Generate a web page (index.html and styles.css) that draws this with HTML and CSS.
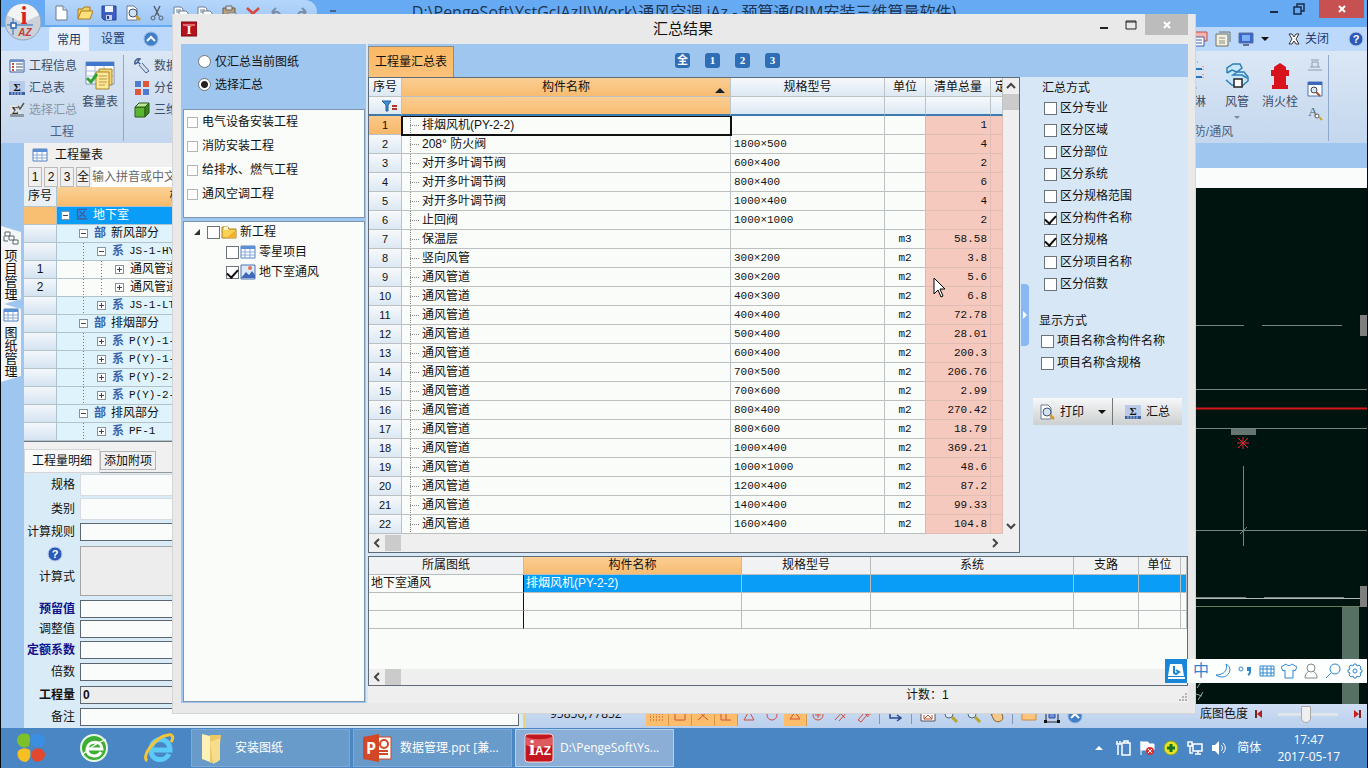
FILE: index.html
```html
<!DOCTYPE html>
<html lang="zh-CN">
  <head>
    <meta charset="utf-8" />
    <meta name="viewport" content="width=device-width, initial-scale=1.0" />
    <title>预算通(BIM安装三维算量软件)</title>
    <link rel="stylesheet" href="styles.css">
  </head>
  <body>
    <!-- 公用图标 -->
    <svg width="0" height="0" class="defs" aria-hidden="true">
      <symbol id="i-new" viewBox="0 0 16 16"><path d="M3 1h7l4 4v10H3z" fill="#fff" stroke="#6a7894"/><path d="M10 1v4h4" fill="#dbe6f5" stroke="#6a7894"/></symbol>
      <symbol id="i-open" viewBox="0 0 16 16"><path d="M1 14V4h5l1-2h6v4" fill="#f4cf62" stroke="#a97b1e"/><path d="M1 14l3-8h12l-3 8z" fill="#ffe07c" stroke="#a97b1e"/></symbol>
      <symbol id="i-save" viewBox="0 0 16 16"><path d="M1 1h14v14H3l-2-2z" fill="#3d5fc4" stroke="#27408f"/><path d="M4 1h8v6H4z" fill="#eef3fc"/><path d="M5 10h6v5H5z" fill="#c9d4ea"/><path d="M6 11h2v3H6z" fill="#27408f"/></symbol>
      <symbol id="i-view" viewBox="0 0 16 16"><path d="M2 1h7l3 3v11H2z" fill="#fff" stroke="#6a7894"/><circle cx="8" cy="8" r="4" fill="#cfe3f5" stroke="#40566f"/><path d="M11 11l4 4" stroke="#d39a32" stroke-width="2.500"/></symbol>
      <symbol id="i-cut" viewBox="0 0 16 16"><path d="M5 1l5 10M11 1L6 11" stroke="#56606e" stroke-width="1.500"/><circle cx="4" cy="13" r="2" fill="none" stroke="#56606e"/><circle cx="12" cy="13" r="2" fill="none" stroke="#56606e"/></symbol>
      <symbol id="i-copy" viewBox="0 0 16 16"><path d="M1 2h7l2 2v8H1z" fill="#fff" stroke="#6d7c93"/><path d="M6 6h7l2 2v7H6z" fill="#fff" stroke="#6d7c93"/><path d="M3 5h5M3 7h3M8 10h5M8 12h5" stroke="#6d7c93"/></symbol>
      <symbol id="i-paste" viewBox="0 0 16 16"><path d="M2 3h12v12H2z" fill="#b9a07c" stroke="#6b5c48"/><path d="M5 1h6v4H5z" fill="#ddd" stroke="#666"/><path d="M7 8h8v7H7z" fill="#fff" stroke="#6d7c93"/></symbol>
      <symbol id="i-del" viewBox="0 0 16 16"><path d="M2 3l12 11M14 3L2 14" stroke="#d8463e" stroke-width="2.500"/></symbol>
      <symbol id="i-undo" viewBox="0 0 16 16"><path d="M3 7h6a4 4 0 010 7M3 7l4-4M3 7l4 4" fill="none" stroke="#7c8da6" stroke-width="2"/></symbol>
      <symbol id="i-redo" viewBox="0 0 16 16"><path d="M13 7H7a4 4 0 000 7M13 7L9 3M13 7l-4 4" fill="none" stroke="#7c8da6" stroke-width="2"/></symbol>
      <symbol id="i-list" viewBox="0 0 16 16"><path d="M1 2h14v12H1z" fill="#fff" stroke="#3d5fa5"/><path d="M1 2h14v2H1z" fill="#6d90cf"/><path d="M7 6h7M7 9h7M7 12h7" stroke="#44597a"/><path d="M3 6h2M3 9h2M3 12h2" stroke="#d0483c" stroke-width="2"/></symbol>
      <symbol id="i-sigma" viewBox="0 0 16 16"><path d="M0 1h16v14H0z" fill="#b9cbe8"/><path d="M0 12h16v3H0z" fill="#3c5f9f"/><path d="M3 12v3M6 12v3M9 12v3M12 12v3" stroke="#a9c2e8"/><text x="8" y="11" text-anchor="middle" font-size="11" font-weight="bold" font-family="Liberation Serif" fill="#111">Σ</text></symbol>
      <symbol id="i-pick" viewBox="0 0 16 16"><path d="M1 3h11v11H1z" fill="#dfe3e8"/><path d="M1 12h14v3H1z" fill="#8d98a5"/><text x="6" y="12" text-anchor="middle" font-size="10" font-weight="bold" font-family="Liberation Serif" fill="#333">Σ</text><path d="M9 4l2 3 4-6" fill="none" stroke="#555" stroke-width="1.500"/></symbol>
      <symbol id="i-big" viewBox="0 0 30 30"><path d="M1 1h28v22H1z" fill="#fff" stroke="#7f95b5"/><path d="M1 1h28v4H1z" fill="#3f78cc"/><path d="M1 10h28M1 15h28M10 5v18M19 5v18" stroke="#a9bdd9"/><path d="M14 8h13v16H14z" fill="#f2d774" stroke="#a8842c"/><path d="M11 11h13v17H11z" fill="#ffe897" stroke="#a8842c"/><path d="M14 15h8M14 18h8M14 21h8M14 24h6" stroke="#b99944"/><path d="M2 17l4 4 6-8" fill="none" stroke="#2fa336" stroke-width="3"/></symbol>
      <symbol id="i-wrench" viewBox="0 0 16 16"><path d="M6 1C3 0 0 3 1 6l2-1 1-2zM4 4l9 9" fill="none" stroke="#46618f" stroke-width="1.500"/><path d="M5 7l7 8 3-2-7-8" fill="#d4def0" stroke="#46618f"/></symbol>
      <symbol id="i-blocks" viewBox="0 0 16 16"><path d="M1 1h6v6H1zM9 9h6v6H9z" fill="#4f7cd0"/><path d="M9 1h6v6H9zM1 9h6v6H1z" fill="#e0563a"/></symbol>
      <symbol id="i-cube" viewBox="0 0 16 16"><path d="M1 5h10v10H1z" fill="#5bb531" stroke="#2d5a1c"/><path d="M1 5l4-4h10l-4 4z" fill="#b9e79a" stroke="#2d5a1c"/><path d="M11 5l4-4v10l-4 4z" fill="#37861b" stroke="#2d5a1c"/></symbol>
      <symbol id="i-grid" viewBox="0 0 16 16"><path d="M1 2h14v12H1z" fill="#fff" stroke="#5680bd"/><path d="M1 2h14v3H1z" fill="#5c90d4"/><path d="M1 8h14M1 11h14M5 5v9M10 5v9" stroke="#87a9d6"/></symbol>
      <symbol id="i-folder" viewBox="0 0 16 16"><path d="M1 3h6l1 2h7v9H1z" fill="#fbd153" stroke="#a87c22"/><path d="M3 3h4v3H3z" fill="#fff6c8"/><path d="M15 6L5 14h10z" fill="#eeb22e"/></symbol>
      <symbol id="i-pic" viewBox="0 0 16 16"><path d="M1 1h14v14H1z" fill="#dceafb" stroke="#4f72b4"/><path d="M1 14l5-6 3 3 3-4 3 4v3z" fill="#3f68b8"/><circle cx="10" cy="4" r="2" fill="#e0704a"/></symbol>
      <symbol id="i-up" viewBox="0 0 16 16"><circle cx="8" cy="8" r="7" fill="#3f7fc8" stroke="#8fb5e2"/><path d="M4 10l4-4 4 4" fill="none" stroke="#fff" stroke-width="2"/></symbol>
      <symbol id="i-help" viewBox="0 0 16 16"><circle cx="8" cy="8" r="7" fill="#2c59b8" stroke="#b9cdef"/><text x="8" y="12" text-anchor="middle" font-size="11" font-weight="bold" font-family="Liberation Sans" fill="#fff">?</text></symbol>
      <symbol id="i-funnel" viewBox="0 0 16 16"><path d="M1 3h9L7 7v6H5V7z" fill="#3e8fd8" stroke="#23619c"/><path d="M11 8h5M11 11h5" stroke="#b3382c" stroke-width="2"/></symbol>
      <symbol id="i-screen" viewBox="0 0 16 16"><path d="M1 2h14v10H1z" fill="#3566d4" stroke="#5c7296"/><path d="M4 4h8v6H4z" fill="#7fb0f5"/><path d="M5 14h6" stroke="#5c7296" stroke-width="2"/></symbol>
      <symbol id="i-sheet" viewBox="0 0 16 16"><path d="M1 3h12v12H1z" fill="#f1efe2" stroke="#6d7460"/><path d="M4 1h11v10" fill="none" stroke="#6d7460"/><path d="M4 7h6M4 10h6M4 12h6" stroke="#8b9178"/></symbol>
      <symbol id="i-zoom" viewBox="0 0 16 16"><circle cx="6" cy="6" r="4" fill="#dbeaf8" stroke="#52647a"/><path d="M9 9l5 5" stroke="#b8a62b" stroke-width="3"/></symbol>
    </svg>

    <div class="app">
      <header class="caption">
        <button class="orb" aria-label="主菜单">
          <svg width="38" height="38" viewBox="0 0 38 38"><circle cx="19" cy="19" r="18" fill="#cdd2d8" stroke="#8ea5c4"/><path d="M3 12a17 17 0 0132 0L19 20z" fill="#f2f3f4"/><path d="M9 15v17M3 22h26" stroke="#2867b5"/><path d="M7 20h5v5H7z" fill="#fff" stroke="#2867b5" stroke-width="1.500"/><text x="20" y="21" text-anchor="middle" font-family="Liberation Serif" font-size="25" font-weight="bold" fill="#dd1f1f">i</text><text x="21" y="33" text-anchor="middle" font-family="Liberation Sans" font-size="10" font-weight="bold" font-style="italic" fill="#c23c33">AZ</text></svg>
        </button>
        <nav class="qat">
          <button aria-label="新建"><svg><use href="#i-new"/></svg></button>
          <button aria-label="打开"><svg><use href="#i-open"/></svg></button>
          <button aria-label="保存"><svg><use href="#i-save"/></svg></button>
          <button aria-label="预览"><svg><use href="#i-view"/></svg></button>
          <button aria-label="剪切"><svg><use href="#i-cut"/></svg></button>
          <button aria-label="复制"><svg><use href="#i-copy"/></svg></button>
          <button aria-label="复制项"><svg><use href="#i-copy"/></svg></button>
          <button aria-label="粘贴"><svg><use href="#i-paste"/></svg></button>
          <button aria-label="删除"><svg><use href="#i-del"/></svg></button>
          <button aria-label="撤销"><svg><use href="#i-undo"/></svg></button>
          <button aria-label="重做"><svg><use href="#i-redo"/></svg></button>
        </nav>
        <button class="qat-more" aria-label="自定义"><svg width="8" height="8" viewBox="0 0 8 8"><path d="M1 1h6" stroke="#223"/><path d="M1 4h6L4 7z" fill="#223"/></svg></button>
        <div class="app-title">D:\PengeSoft\YstGclAzII\Work\通风空调.iAz - 预算通(BIM安装三维算量软件)</div>
        <div class="win-btns">
          <button aria-label="最小化"><svg width="10" height="10" viewBox="0 0 10 10"><path d="M1 8h8" stroke="#1b2b45" stroke-width="2"/></svg></button>
          <button aria-label="还原"><svg width="12" height="12" viewBox="0 0 12 12"><path d="M1 4h7v7H1zM4 4V1h7v7H8" fill="none" stroke="#1b2b45" stroke-width="1.500"/></svg></button>
          <button class="close" aria-label="关闭窗口"><svg width="8" height="8" viewBox="0 0 8 8"><path d="M1 1l6 6M7 1L1 7" stroke="#fff" stroke-width="2"/></svg></button>
        </div>
      </header>

      <nav class="tabs">
        <button class="tab on">常用</button>
        <button class="tab">设置</button>
        <button class="ico" aria-label="折叠功能区"><svg><use href="#i-up"/></svg></button>
        <div class="tabs-right">
          <button class="ico" aria-label="图层"><svg viewBox="0 0 16 16"><path d="M2 1h13v9H2z" fill="#f6b3ab" stroke="#c04f48"/><path d="M1 6h11v9H1z" fill="#fff" stroke="#3a5fae"/><path d="M3 9h7M3 12h7" stroke="#3a5fae"/></svg></button>
          <button class="ico" aria-label="页面"><svg><use href="#i-sheet"/></svg></button>
          <button class="ico" aria-label="屏幕"><svg><use href="#i-screen"/></svg></button>
          <button class="drop" aria-label="更多屏幕"></button>
          <button class="txt"><svg width="12" height="12" viewBox="0 0 12 12"><path d="M1 1h3l2 3 2-3h3L8 6l3 5H8L6 8l-2 3H1l3-5z" fill="#fff" stroke="#333"/></svg>关闭</button>
          <button class="ico" aria-label="帮助"><svg><use href="#i-help"/></svg></button>
        </div>
      </nav>

      <div class="ribbon">
        <section class="group">
          <div class="group-body">
            <div class="stack">
              <button><svg><use href="#i-list"/></svg>工程信息</button>
              <button><svg><use href="#i-sigma"/></svg>汇总表</button>
              <button class="off"><svg><use href="#i-pick"/></svg>选择汇总</button>
            </div>
            <button class="big"><svg width="30" height="30"><use href="#i-big"/></svg>套量表</button>
          </div>
          <div class="group-name">工程</div>
        </section>
        <section class="group">
          <div class="group-body">
            <div class="stack">
              <button><svg><use href="#i-wrench"/></svg>数据维护</button>
              <button><svg><use href="#i-blocks"/></svg>分色显示</button>
              <button><svg><use href="#i-cube"/></svg>三维显示</button>
            </div>
          </div>
        </section>
        <section class="group vent">
          <div class="group-body">
            <button class="big"><svg width="26" height="30" viewBox="0 0 26 30"><path d="M13 1v26M3 8h18M3 16h18" stroke="#2277c8" stroke-width="2"/><circle cx="13" cy="27" r="2" fill="#fff" stroke="#2277c8"/><path d="M22 5v6M22 13v6M4 5v6M4 13v6M10 1h7" stroke="#d05a5a" stroke-dasharray="1 2"/></svg>喷淋</button>
            <button class="big"><svg width="26" height="30" viewBox="0 0 26 30"><path d="M3 12V7l6-4h7l2 4-5 4h7l4 5v4l-6 5-10-1-6-5" fill="#c9e6f8" stroke="#2c7fb8" stroke-width="1.500"/><path d="M3 12l5-3 5 2-4 3h9l5 3" fill="none" stroke="#2c7fb8" stroke-width="1.500"/><path d="M10 18h8v8h-8z" fill="#fff" stroke="#222" stroke-width="1.500"/></svg>风管<i class="drop"></i></button>
            <button class="big"><svg width="26" height="30" viewBox="0 0 26 30"><path d="M13 2l6 4v3h3v6h-3v9h2v4H5v-4h2v-9H4V9h3V6z" fill="#d8131b"/></svg>消火栓</button>
            <div class="tools">
              <button class="ico" aria-label="阀门"><svg viewBox="0 0 16 16"><path d="M1 13h14M3 10h10M5 10V5h6v5M4 3h8" fill="none" stroke="#929ca9"/></svg></button>
              <button class="ico" aria-label="查找表"><svg viewBox="0 0 16 16"><path d="M1 1h14v14H1z" fill="#fff" stroke="#4b74b6"/><path d="M1 1h14v3H1z" fill="#3b67b8"/><circle cx="7" cy="9" r="3" fill="#d8e8f8" stroke="#445"/><path d="M9 11l4 4" stroke="#a4522c" stroke-width="2"/></svg></button>
              <button class="ico" aria-label="查找文字"><svg viewBox="0 0 16 16"><text x="6" y="11" text-anchor="middle" font-size="13" font-family="Liberation Serif" fill="#4b5a70">A</text><circle cx="10" cy="11" r="2" fill="#fff" stroke="#556"/><path d="M12 12l3 3" stroke="#d0a52a" stroke-width="2"/></svg></button>
            </div>
          </div>
          <div class="group-name">消防/通风</div>
        </section>
      </div>

      <main class="work">
        <aside class="side-tabs">
          <button><svg viewBox="0 0 16 16"><path d="M2 2h5v4H2zM6 6h5v4H6zM10 10h5v4h-5z" fill="#fff" stroke="#566"/><path d="M1 6v5h4" fill="none" stroke="#566"/></svg>项目管理</button>
          <button><svg><use href="#i-grid"/></svg>图纸管理</button>
        </aside>

        <section class="panel">
          <h2><svg><use href="#i-grid"/></svg>工程量表</h2>
          <div class="find">
            <button>1</button><button>2</button><button>3</button><button>全</button>
            <input type="text" placeholder="输入拼音或中文首字母" aria-label="查找" />
          </div>
          <table class="parts">
            <thead><tr><th>序号</th><th class="on">构件名称</th><th class="on"></th></tr></thead>
            <tbody id="parts"></tbody>
          </table>
          <div class="detail-tabs">
            <button class="on">工程量明细</button>
            <button>添加附项</button>
          </div>
          <form class="detail">
            <label for="f1">规格</label><input id="f1" class="flat" />
            <label for="f2">类别</label><input id="f2" class="flat" />
            <label for="f3">计算规则</label><input id="f3" />
            <div class="formula"><svg><use href="#i-help"/></svg><label for="f4">计算式</label></div><textarea id="f4"></textarea>
            <label for="f5" class="key">预留值</label><input id="f5" />
            <label for="f6">调整值</label><input id="f6" />
            <label for="f7" class="key">定额系数</label><input id="f7" />
            <label for="f8">倍数</label><input id="f8" />
            <label for="f9" class="strong">工程量</label><input id="f9" class="total" value="0" />
            <label for="f10">备注</label><input id="f10" />
          </form>
        </section>

        <section class="drawing">
          <div class="strip"></div>
          <div class="ruler"></div>
          <div class="model">
            <svg width="171" height="516" viewBox="0 0 171 516">
              <g fill="none" stroke="#75867f">
                <path d="M0 137.500h48M66 137.500h80M0 201.500h171M0 240.500h171M0 342.500h171"/>
                <path d="M0 409.500h50M68 409.500h80M47.500 278v80M44 346l7-7"/>
              </g>
              <path d="M0 410.500h165" stroke="#b9b9b9"/>
              <path d="M0 418.500h171" stroke="#667f5c"/>
              <path d="M0 220.500h171" stroke="#d5161c" stroke-width="2"/>
              <path d="M35 241h25v6H35z" fill="#66756f"/>
              <path d="M42 250l10 10M52 250l-10 10M47 249v12M41 255h12" stroke="#e2263a"/>
              <path d="M146 419h17v97h-17z" fill="#567064"/>
              <path d="M164 127h7v21h-7zM164 398h7v21h-7z" fill="#7f7f7f"/>
              <path d="M1 500l4-6M0 506l6 2M2 512l5-8" stroke="#9aa69f"/>
            </svg>
          </div>
          <footer class="status">
            <span class="coords">95856,77852</span>
            <div class="snaps">
              <button class="on" aria-label="栅格"><svg viewBox="0 0 16 16"><path d="M1 3h14M1 6h14M1 9h14M1 12h14" stroke="#a8502c" stroke-dasharray="1 2"/></svg></button>
              <button class="on" aria-label="端点"><svg viewBox="0 0 16 16"><path d="M3 3h10v9H3z"/></svg></button>
              <button class="on" aria-label="交点"><svg viewBox="0 0 16 16"><path d="M3 3l10 9M13 3L3 12"/></svg></button>
              <button class="on" aria-label="垂足"><svg viewBox="0 0 16 16"><path d="M3 3v9h10M8 3v9"/></svg></button>
              <button aria-label="中点"><svg viewBox="0 0 16 16"><path d="M8 3l5 9H3z"/></svg></button>
              <button aria-label="圆心"><svg viewBox="0 0 16 16"><circle cx="8" cy="7" r="5"/></svg></button>
              <button class="on" aria-label="三角"><svg viewBox="0 0 16 16"><path d="M8 4l5 7H3z"/></svg></button>
              <button aria-label="节点"><svg viewBox="0 0 16 16"><circle cx="8" cy="7" r="5"/><path d="M5 7h6M8 4v6"/></svg></button>
              <button aria-label="平行"><svg viewBox="0 0 16 16"><path d="M2 12L10 3M6 13l8-9M8 6l4 4"/></svg></button>
              <button aria-label="延伸"><svg viewBox="0 0 16 16"><path d="M2 12l6-7 3 2-6 7zM9 6h6M12 3v6"/></svg></button>
            </div>
            <div class="views">
              <button aria-label="正交"><svg viewBox="0 0 16 16"><path d="M2 4v6h11M9 7l4 3-4 3" fill="none" stroke="#2c4a90" stroke-width="1.500"/></svg></button>
              <button class="first" aria-label="全图"><svg viewBox="0 0 16 16"><path d="M1 3h14v10H1z" fill="#fff" stroke="#555"/><path d="M4 7v4h8V7M4 11l4-4 4 4" fill="none" stroke="#c0502c"/></svg></button>
              <button aria-label="放大"><svg><use href="#i-zoom"/></svg></button>
              <button aria-label="缩小"><svg><use href="#i-zoom"/></svg></button>
              <button aria-label="平移"><svg viewBox="0 0 16 16"><path d="M2 6l3 6c3 3 8 2 9-2l-1-4-3-2-2 2-3-3-1 3z" fill="#f4c98c" stroke="#8c5c2c"/></svg></button>
              <button class="first" aria-label="图纸"><svg viewBox="0 0 16 16"><path d="M1 4l2-2h12v10H1z" fill="#ffc57c" stroke="#cf8a3c"/></svg></button>
              <button aria-label="窗口"><svg viewBox="0 0 16 16"><path d="M2 1v13h12V1" fill="none" stroke="#223"/><path d="M5 3h6v7H5z" fill="#6d8fe0" stroke="#2c4a90"/><path d="M0 12h3v3H0zM13 12h3v3h-3z" fill="#111"/></svg></button>
              <button aria-label="收起"><svg><use href="#i-up"/></svg></button>
            </div>
            <label class="shade">底图色度
              <svg width="8" height="8" viewBox="0 0 8 8"><path d="M1 0v8" stroke="#7d2222" stroke-width="2"/><path d="M7 0v8L2 4z" fill="#b02020"/></svg>
              <input type="range" value="46" />
              <svg width="8" height="8" viewBox="0 0 8 8"><path d="M7 0v8" stroke="#7d2222" stroke-width="2"/><path d="M1 0v8l5-4z" fill="#d01a1a"/></svg>
            </label>
          </footer>
        </section>
      </main>
    </div>

    <!-- 汇总结果 -->
    <div class="dialog" role="dialog" aria-labelledby="dlg-title">
      <header class="dlg-head">
        <svg class="dlg-icon" viewBox="0 0 16 16"><path d="M0 1h16v14H0z" fill="#b5121c" stroke="#7c0d14"/><path d="M2 3h12v2H2z" fill="#e26a6e"/><text x="8" y="13" text-anchor="middle" font-size="13" font-weight="bold" font-family="Liberation Serif" fill="#fff">I</text></svg>
        <h1 id="dlg-title">汇总结果</h1>
        <div class="dlg-btns">
          <button aria-label="最小化"><svg width="10" height="10" viewBox="0 0 10 10"><path d="M1 8h8" stroke="#222" stroke-width="2"/></svg></button>
          <button aria-label="最大化"><svg width="12" height="10" viewBox="0 0 12 10"><path d="M1 1h10v8H1zM1 2h10" fill="none" stroke="#222"/></svg></button>
          <button class="close" aria-label="关闭"><svg width="10" height="10" viewBox="0 0 10 10"><path d="M2 2l6 6M8 2L2 8" stroke="#fff" stroke-width="2"/></svg></button>
        </div>
      </header>

      <div class="dlg-body">
        <aside class="scope">
          <div class="scope-mode">
            <label><input type="radio" name="scope" />仅汇总当前图纸</label>
            <label><input type="radio" name="scope" checked />选择汇总</label>
          </div>
          <div class="majors">
            <label><input type="checkbox" />电气设备安装工程</label>
            <label><input type="checkbox" />消防安装工程</label>
            <label><input type="checkbox" />给排水、燃气工程</label>
            <label><input type="checkbox" />通风空调工程</label>
          </div>
          <div class="tree">
            <label class="root"><svg width="8" height="8" viewBox="0 0 8 8"><path d="M7 1v6H1z" fill="#333"/></svg><input type="checkbox" /><svg><use href="#i-folder"/></svg>新工程</label>
            <label><input type="checkbox" /><svg><use href="#i-grid"/></svg>零星项目</label>
            <label><input type="checkbox" checked /><svg><use href="#i-pic"/></svg>地下室通风</label>
          </div>
        </aside>

        <div class="result">
          <div class="result-tabs">
            <button class="result-tab">工程量汇总表</button>
            <div class="levels"><button>全</button><button>1</button><button>2</button><button>3</button></div>
          </div>

          <div class="upper">
            <div class="grid-box">
              <div class="grid-view">
                <table class="sum">
                  <colgroup><col class="c-no"><col><col class="c-spec"><col class="c-unit"><col class="c-qty"><col class="c-more"></colgroup>
                  <thead>
                    <tr><th>序号</th><th class="on">构件名称<i class="sort"></i></th><th>规格型号</th><th>单位</th><th>清单总量</th><th class="cut">定额</th></tr>
                    <tr class="filter"><th><svg width="16" height="16"><use href="#i-funnel"/></svg></th><th class="on"></th><th></th><th></th><th></th><th></th></tr>
                  </thead>
                  <tbody id="sum"></tbody>
                </table>
              </div>
              <div class="vbar"><button aria-label="向上"><svg viewBox="0 0 10 10"><path d="M1 7l4-4 4 4"/></svg></button><i></i><button class="end" aria-label="向下"><svg viewBox="0 0 10 10"><path d="M1 3l4 4 4-4"/></svg></button></div>
              <div class="hbar"><button aria-label="向左"><svg viewBox="0 0 10 10"><path d="M7 1L3 5l4 4"/></svg></button><i></i><button class="end" aria-label="向右"><svg viewBox="0 0 10 10"><path d="M3 1l4 4-4 4"/></svg></button></div>
            </div>

            <div class="options">
              <button class="handle" aria-label="收起"></button>
              <div class="option-list">
                <fieldset>
                  <legend>汇总方式</legend>
                  <label><input type="checkbox" />区分专业</label>
                  <label><input type="checkbox" />区分区域</label>
                  <label><input type="checkbox" />区分部位</label>
                  <label><input type="checkbox" />区分系统</label>
                  <label><input type="checkbox" />区分规格范围</label>
                  <label><input type="checkbox" checked />区分构件名称</label>
                  <label><input type="checkbox" checked />区分规格</label>
                  <label><input type="checkbox" />区分项目名称</label>
                  <label><input type="checkbox" />区分倍数</label>
                </fieldset>
                <fieldset class="show">
                  <legend>显示方式</legend>
                  <label><input type="checkbox" />项目名称含构件名称</label>
                  <label><input type="checkbox" />项目名称含规格</label>
                </fieldset>
                <div class="actions">
                  <button><svg><use href="#i-view"/></svg>打印<i class="drop"></i></button>
                  <button><svg><use href="#i-sigma"/></svg>汇总</button>
                </div>
              </div>
            </div>
          </div>

          <div class="lower">
            <table class="source">
              <colgroup><col class="s-draw"><col class="s-name"><col class="s-spec"><col><col class="s-road"><col class="s-unit"><col class="s-more"></colgroup>
              <thead><tr><th>所属图纸</th><th class="on">构件名称</th><th>规格型号</th><th>系统</th><th>支路</th><th>单位</th><th></th></tr></thead>
              <tbody>
                <tr class="sel"><td>地下室通风</td><td>排烟风机(PY-2-2)</td><td></td><td></td><td></td><td></td><td></td></tr>
                <tr><td></td><td></td><td></td><td></td><td></td><td></td><td></td></tr>
                <tr><td></td><td></td><td></td><td></td><td></td><td></td><td></td></tr>
              </tbody>
            </table>
            <div class="hbar"><button aria-label="向左"><svg viewBox="0 0 10 10"><path d="M7 1L3 5l4 4"/></svg></button><i></i></div>
          </div>
          <div class="dlg-status"><span>计数：1</span><svg width="10" height="10" viewBox="0 0 10 10"><path d="M7 1h2M4 4h2M7 4h2M1 7h2M4 7h2M7 7h2" stroke="#b5b5b5" stroke-width="2"/></svg></div>
        </div>
      </div>
    </div>

    <svg class="pointer" viewBox="0 0 13 21"><path d="M1 1v16l4-4 3 7 2-1-3-7h5z" fill="#fff" stroke="#000"/></svg>

    <!-- 输入法 -->
    <div class="ime">
      <svg class="bing" viewBox="0 0 22 24"><path d="M0 0h22v24H0z" fill="#1a86d8"/><path d="M5 5h12l2 12H3zM3 18h17v2H3z" fill="#fff"/><path d="M9 7v7l2 1 3-2-3-2" fill="none" stroke="#1a86d8" stroke-width="2"/></svg>
      <span>中</span>
      <svg viewBox="0 0 16 16"><path d="M11 1c2 6-2 11-10 11 5 4 13 2 14-5 0-3-2-5-4-6z"/></svg>
      <svg viewBox="0 0 16 16"><circle cx="4" cy="6" r="2"/><path d="M12 6c2 2 1 5-1 6M11 5h2v2h-2z" stroke-width="2"/></svg>
      <svg viewBox="0 0 16 16"><path d="M1 3h14v10H1zM1 6h14M1 10h14M4 3v10M8 3v10M12 3v10"/></svg>
      <svg viewBox="0 0 16 16"><path d="M5 1c1 2 5 2 6 0l5 3-2 4-2-1v8H4V7L2 8 0 4z"/></svg>
      <svg class="gray" viewBox="0 0 16 16"><circle cx="8" cy="5" r="4"/><path d="M6 8c-3 2-4 4-4 7h12c0-3-1-5-4-7"/></svg>
      <svg viewBox="0 0 16 16"><circle cx="10" cy="6" r="5"/><path d="M6 10l-5 5"/></svg>
      <svg viewBox="0 0 16 16"><path d="M7 1h2l1 2 2-1 2 2-1 2 2 1v2l-2 1 1 2-2 2-2-1-1 2H7l-1-2-2 1-2-2 1-2-2-1V7l2-1-1-2 2-2 2 1z"/><circle cx="8" cy="8" r="2"/></svg>
    </div>

    <footer class="taskbar">
      <button class="pin" aria-label="开始"><svg width="32" height="32" viewBox="0 0 32 32"><path d="M2 10C1 3 7 0 13 2c3 2 2 8 1 12-5 3-10 1-12-4z" fill="#7cc02c"/><path d="M17 3c6-3 13 0 13 6 0 5-5 7-12 5-2-4-3-8-1-11z" fill="#3b8fe2"/><path d="M3 19c4-4 9-3 12-1 1 5 0 10-4 12-6 0-10-5-8-11z" fill="#f8bf22"/><path d="M18 18c5-3 11-1 12 4 0 6-6 9-11 7-3-3-3-7-1-11z" fill="#e2482e"/></svg></button>
      <button class="pin" aria-label="浏览器"><svg width="30" height="30" viewBox="0 0 30 30"><circle cx="15" cy="15" r="13" fill="#3fae35" stroke="#e7f7e0" stroke-width="2"/><path d="M8 16h15c0-9-14-9-15 0 0 8 11 9 14 3" fill="none" stroke="#fff" stroke-width="3"/><path d="M3 22C8 17 20 8 27 7" stroke="#fff" stroke-width="1.500" fill="none"/></svg></button>
      <button class="pin" aria-label="Internet Explorer"><svg width="32" height="32" viewBox="0 0 32 32"><path d="M8 18h19c0-14-19-14-19 0 0 12 14 12 18 4" fill="none" stroke="#5ccaf8" stroke-width="5"/><path d="M4 29C-2 24 12 5 25 3c5-1 6 3 3 7" fill="none" stroke="#f5c533" stroke-width="3"/></svg></button>
      <button class="task"><svg width="24" height="32" viewBox="0 0 24 32"><path d="M2 2l8 2v26l-8-3z" fill="#fdf1b8"/><path d="M10 3h11l-3 27-8 1z" fill="#ecc866"/><path d="M10 10l10-4v22l-7 4z" fill="#f6dc8c"/></svg>安装图纸</button>
      <button class="task"><svg width="30" height="30" viewBox="0 0 30 30"><path d="M13 4h16v22H13z" fill="#fff" stroke="#d24726"/><circle cx="22" cy="11" r="4" fill="#fff" stroke="#d24726" stroke-width="2"/><path d="M17 18h9M17 21h9" stroke="#d24726" stroke-width="2"/><path d="M1 4l16-3v28L1 26z" fill="#d24726"/><text x="9" y="21" text-anchor="middle" font-size="16" font-weight="bold" font-family="Open Sans" fill="#fff">P</text></svg>数据管理.ppt [兼...</button>
      <button class="task on"><svg width="30" height="30" viewBox="0 0 30 30"><rect x="1" y="1" width="28" height="28" rx="3" fill="#c3161f" stroke="#f1d8d8"/><path d="M2 4c8 3 18 3 26 0v8c-8 4-18 4-26 0z" fill="#dd5a5e"/><text x="8" y="22" text-anchor="middle" font-size="22" font-weight="bold" font-family="Liberation Serif" fill="#fff">i</text><text x="19" y="22" text-anchor="middle" font-size="12" font-weight="bold" font-family="Liberation Sans" fill="#fff">AZ</text></svg>D:\PengeSoft\Ys...</button>
      <div class="tray">
        <svg viewBox="0 0 16 16"><path d="M4 10h8L8 6z" fill="#fff"/></svg>
        <svg viewBox="0 0 16 16"><path d="M7 3h8v12H7zM9 1h4v2H9z" fill="none" stroke="#fff" stroke-width="1.500"/><path d="M1 4h5M2 1v3M5 1v3M3 5v10" stroke="#fff" stroke-width="1.500"/></svg>
        <svg viewBox="0 0 16 16"><path d="M2 1v14M2 2h7l1 2h5v6H2z" fill="#fff" stroke="#fff"/><circle cx="11" cy="11" r="4" fill="#dd3030"/><path d="M9 9l4 4M13 9l-4 4" stroke="#fff"/></svg>
        <svg viewBox="0 0 16 16"><circle cx="8" cy="8" r="7" fill="#e9e22b" stroke="#6fa52c"/><path d="M8 4v8M4 8h8" stroke="#14731e" stroke-width="3"/></svg>
        <svg viewBox="0 0 16 16"><path d="M6 4h9v7H6zM8 14h6M11 11v3M1 2h4v4H1zM3 6v7h3" fill="none" stroke="#fff" stroke-width="1.500"/></svg>
        <svg viewBox="0 0 16 16"><path d="M1 5h3l4-4v14l-4-4H1z" fill="#fff"/><path d="M10 5c2 2 2 4 0 6M12 3c3 3 3 7 0 10" fill="none" stroke="#fff"/></svg>
        <span class="lang">简体</span>
        <time>17:47<br />2017-05-17</time>
      </div>
    </footer>

    <script>
      // 汇总表数据：名称, 规格, 单位, 数量
      var rows = [
        ["排烟风机(PY-2-2)", "", "", "1"],
        ["208° 防火阀", "1800×500", "", "4"],
        ["对开多叶调节阀", "600×400", "", "2"],
        ["对开多叶调节阀", "800×400", "", "6"],
        ["对开多叶调节阀", "1000×400", "", "4"],
        ["止回阀", "1000×1000", "", "2"],
        ["保温层", "", "m3", "58.58"],
        ["竖向风管", "300×200", "m2", "3.8"],
        ["通风管道", "300×200", "m2", "5.6"],
        ["通风管道", "400×300", "m2", "6.8"],
        ["通风管道", "400×400", "m2", "72.78"],
        ["通风管道", "500×400", "m2", "28.01"],
        ["通风管道", "600×400", "m2", "200.3"],
        ["通风管道", "700×500", "m2", "206.76"],
        ["通风管道", "700×600", "m2", "2.99"],
        ["通风管道", "800×400", "m2", "270.42"],
        ["通风管道", "800×600", "m2", "18.79"],
        ["通风管道", "1000×400", "m2", "369.21"],
        ["通风管道", "1000×1000", "m2", "48.6"],
        ["通风管道", "1200×400", "m2", "87.2"],
        ["通风管道", "1400×400", "m2", "99.33"],
        ["通风管道", "1600×400", "m2", "104.8"],
      ];
      var html = "";
      rows.forEach(function (r, i) {
        html +=
          "<tr" + (i === 0 ? ' class="cur"' : "") + "><th>" + (i + 1) +
          '</th><td><i class="stem"></i>' + r[0] +
          "</td><td>" + r[1] + "</td><td>" + r[2] + "</td><td>" + r[3] +
          "</td><td></td></tr>";
      });
      document.getElementById("sum").innerHTML = html;

      // 左侧构件树：序号, 层级, 展开标记, 图标, 名称
      var parts = [
        ["", 0, "-", "区", "地下室"],
        ["", 1, "-", "部", "新风部分"],
        ["", 2, "-", "系", "JS-1-HY"],
        ["1", 3, "+", "", "通风管道"],
        ["2", 3, "+", "", "通风管道"],
        ["", 2, "+", "系", "JS-1-LT"],
        ["", 1, "-", "部", "排烟部分"],
        ["", 2, "+", "系", "P(Y)-1-1"],
        ["", 2, "+", "系", "P(Y)-1-2"],
        ["", 2, "+", "系", "P(Y)-2-1"],
        ["", 2, "+", "系", "P(Y)-2-2"],
        ["", 1, "-", "部", "排风部分"],
        ["", 2, "+", "系", "PF-1"],
      ];
      html = "";
      parts.forEach(function (p) {
        var pad = "";
        for (var i = 0; i < p[1]; i++) {
          pad += '<i class="guide' + (i ? " line" : "") + '"></i>';
        }
        var cls = p[1] === 0 ? "sel" : p[0] ? "leaf" : "";
        html +=
          '<tr class="' + cls + '"><th>' + p[0] + '</th><td><div class="node">' + pad +
          '<i class="box ' + (p[2] === "+" ? "plus" : "") + '"></i>' +
          (p[3] ? "<b>" + p[3] + "</b>" : "") +
          '<span class="' + (p[3] === "系" ? "code" : "") + '">' + p[4] +
          "</span></div></td><td></td></tr>";
      });
      document.getElementById("parts").innerHTML = html;
    </script>
  </body>
</html>
```

FILE: styles.css
```css
* {
  box-sizing: border-box;
}
html,
body {
  height: 100%;
  margin: 0;
}
body {
  display: flex;
  flex-direction: column;
  padding: 0 1px;
  overflow: hidden;
  background: #050a10;
  color: #111;
  font-family: "Liberation Sans", "Noto Sans CJK SC", sans-serif;
  font-size: 12px;
  line-height: 18px;
}
button,
input,
textarea {
  margin: 0;
  padding: 0;
  border: 0;
  background: none;
  color: inherit;
  font: inherit;
}
svg {
  display: block;
  flex: none;
}
button > svg:not([width]),
label > svg:not([width]),
h2 > svg,
.formula > svg {
  width: 16px;
  height: 16px;
}
.defs {
  position: absolute;
}
table {
  width: 100%;
  table-layout: fixed;
  border-spacing: 0;
}
th,
td {
  padding: 0;
  font-weight: normal;
  white-space: nowrap;
  overflow: hidden;
}
.drop {
  width: 0;
  height: 0;
  border: 4px solid transparent;
  border-top-color: #111;
  border-bottom: 0;
}

/* 主窗口 */
.app {
  flex: 1;
  min-height: 0;
  display: flex;
  flex-direction: column;
  background: #9fc6ee;
}
.caption {
  position: relative;
  display: flex;
  flex: none;
  height: 27px;
  background: #65aaf2;
}
.orb {
  position: absolute;
  left: 3px;
  top: 3px;
}
.qat {
  display: flex;
  align-items: center;
  gap: 8px;
  margin-left: 44px;
  height: 25px;
  padding: 0 8px;
  border-radius: 0 12px 12px 0;
  background: linear-gradient(#b5d6fb, #9cc6f5);
}
.qat-more {
  padding: 0 12px;
}
.app-title {
  position: absolute;
  left: 25%;
  right: 25%;
  text-align: center;
  font-family: "Open Sans", "Noto Sans CJK SC", sans-serif;
  font-size: 16px;
  line-height: 24px;
  white-space: nowrap;
  color: #1d3554;
}
.win-btns {
  display: flex;
  align-items: flex-start;
  margin-left: auto;
  gap: 14px;
  padding-right: 3px;
}
.win-btns button {
  height: 18px;
}
.win-btns .close {
  display: flex;
  justify-content: center;
  align-items: center;
  width: 45px;
  background: #c75050;
}
.tabs {
  display: flex;
  align-items: center;
  flex: none;
  height: 24px;
  padding-left: 48px;
  background: #bcd8fb;
  color: #1c3a6e;
}
.tab {
  align-self: stretch;
  padding: 0 8px;
  margin-right: 4px;
}
.tab.on {
  padding-top: 1px;
  border-radius: 3px 3px 0 0;
  background: #eaf3fd;
}
.tabs > .ico {
  margin-left: 6px;
}
.tabs-right {
  display: flex;
  align-items: center;
  gap: 7px;
  margin-left: auto;
  padding-right: 3px;
}
.tabs-right .txt {
  display: flex;
  align-items: center;
  gap: 5px;
  margin: 0 12px;
}
.ribbon {
  display: flex;
  flex: none;
  height: 92px;
  padding: 4px 38px 2px 0;
  background: linear-gradient(#dbe7f5, #c4d7ee);
  color: #3c4c66;
}
.group {
  display: flex;
  flex-direction: column;
  width: 123px;
  border-right: 1px solid #8fa9cc;
}
.group + .group {
  padding-left: 2px;
}
.group.vent {
  width: 244px;
  margin-left: auto;
}
.group-body {
  display: flex;
  flex: 1;
  gap: 5px;
  padding-left: 8px;
}
.group.vent .group-body {
  justify-content: flex-end;
  gap: 7px;
  padding-right: 5px;
}
.stack button {
  display: flex;
  align-items: center;
  gap: 4px;
  height: 22px;
  white-space: nowrap;
}
.stack .off {
  color: #8995a4;
}
.big {
  display: flex;
  flex-direction: column;
  align-items: center;
  gap: 2px;
  width: 36px;
  padding-top: 6px;
  white-space: nowrap;
}
.big .drop {
  margin-top: 3px;
  border-width: 3px;
  border-bottom: 0;
  border-top-color: #7688a4;
}
.tools {
  display: flex;
  flex-direction: column;
  gap: 8px;
  padding-top: 2px;
  margin-left: 2px;
}
.group-name {
  text-align: center;
  line-height: 18px;
  color: #4c5f80;
}

.work {
  flex: 1;
  min-height: 0;
  display: flex;
}
.side-tabs {
  width: 23px;
  padding-top: 83px;
}
.side-tabs button {
  display: flex;
  flex-direction: column;
  align-items: center;
  gap: 3px;
  width: 20px;
  height: 79px;
  padding: 4px 3px 0;
  margin-bottom: -2px;
  clip-path: polygon(0 0, 100% 6px, 100% 73px, 0 100%);
  background: #f4f6f7;
  font-size: 13px;
  line-height: 13px;
  white-space: normal;
  overflow-wrap: anywhere;
}
.panel {
  display: flex;
  flex-direction: column;
  width: 499px;
  background: #f0f0f0;
}
.panel h2 {
  display: flex;
  align-items: center;
  gap: 7px;
  flex: none;
  height: 24px;
  margin: 0;
  padding-left: 8px;
  font-size: 12px;
  font-weight: normal;
}
.find {
  display: flex;
  flex: none;
  gap: 2px;
  height: 20px;
  padding-left: 4px;
}
.find button {
  width: 14px;
  border: 1px solid #b9b9b9;
}
.find input {
  flex: 1;
  background: #fff;
}
.find input::placeholder {
  color: #666;
}
.parts th,
.parts td {
  height: 18px;
  line-height: 17px;
  border-right: 1px solid #aac4d2;
  border-bottom: 1px solid #b4c3ca;
}
.parts thead th {
  height: 20px;
  background: #e9eff7;
}
.parts th:first-child {
  width: 33px;
}
.parts th:nth-child(2) {
  width: 274px;
}
.parts thead .on {
  background: linear-gradient(#fbd197, #f6bb6b);
}
.parts tbody th {
  background: linear-gradient(#f3f7fb, #d5e3f1);
}
.parts tbody td {
  background: #def3fb;
}
.parts .leaf td {
  background: #fafcfa;
}
.parts .sel th {
  background: #f8bf73;
}
.parts .sel td {
  background: #0a9df7;
  color: #fff;
}
.parts {
  border-bottom: 1px solid #70787f;
}
.node {
  display: flex;
  align-items: center;
  height: 17px;
  padding-left: 4px;
}
.guide {
  width: 18px;
  height: 18px;
}
.guide.line {
  background: repeating-linear-gradient(#777 0 1px, transparent 1px 3px) 4px 0 / 1px 18px no-repeat;
}
.box {
  width: 9px;
  height: 9px;
  margin-right: 6px;
  border: 1px solid #8a9199;
  background: linear-gradient(#445, #445) center / 5px 1px no-repeat, #fff;
}
.box.plus {
  background: linear-gradient(#445, #445) center / 5px 1px no-repeat, linear-gradient(#445, #445) center / 1px 5px no-repeat, #fff;
}
.node b {
  width: 17px;
  color: #3a62a8;
}
.code {
  font-family: "Liberation Mono", monospace;
  font-size: 11px;
}
.detail-tabs {
  display: flex;
  align-items: flex-end;
  flex: none;
  height: 31px;
  padding-top: 8px;
  border-bottom: 1px solid #9a9a9a;
}
.detail-tabs button {
  height: 19px;
  padding: 0 3px;
  margin-bottom: 2px;
  border: 1px solid #b5b5b5;
}
.detail-tabs .on {
  height: 24px;
  margin-bottom: -1px;
  padding: 0 7px;
  border-color: #d5d5d5;
  background: #fafafa;
}
.detail {
  display: grid;
  grid-template-columns: 51px 1fr;
  grid-template-rows: 24px 24px 22px 55px 21px 20px 22px 22px 23px 22px;
  column-gap: 5px;
  align-items: center;
  flex: 1;
  padding-right: 4px;
  background: #d9ebf7;
  text-align: right;
  white-space: nowrap;
}
.detail > label {
  justify-self: end;
}
.detail input {
  height: 18px;
  padding: 0 2px;
  border: 1px solid #5c6670;
  background: #fafcfb;
}
.detail .flat {
  height: 22px;
  border-color: #d5dde2;
}
.detail .total {
  background: #ededed;
  font-weight: bold;
}
.detail textarea {
  height: 50px;
  border: 1px solid #a5a5a5;
  background: #ededed;
  resize: none;
}
.formula {
  display: flex;
  flex-direction: column;
  align-items: flex-end;
  align-self: start;
  gap: 6px;
  padding-top: 3px;
}
.formula > svg {
  margin-right: 12px;
}
.key {
  color: #12128a;
  font-weight: bold;
}
.strong {
  font-weight: bold;
}

.drawing {
  flex: 1;
  display: flex;
  flex-direction: column;
  min-width: 0;
}
.strip {
  height: 25px;
}
.ruler {
  height: 20px;
  background: #fafcfb;
}
.model {
  flex: 1;
  min-height: 0;
  overflow: hidden;
  background: #00140f;
}
.model svg {
  margin-left: auto;
}
.status {
  display: flex;
  align-items: center;
  height: 24px;
  padding: 0 6px 0 24px;
  border-left: 3px solid #ecd47b;
  background: linear-gradient(#cfdef3, #b9cfed);
  white-space: nowrap;
}
.coords {
  width: 96px;
  padding-bottom: 4px;
  font-family: "Open Sans", sans-serif;
  font-size: 12px;
}
.snaps,
.views {
  display: flex;
}
.snaps button {
  display: flex;
  justify-content: center;
  width: 23px;
  padding: 2px 0;
  border-right: 1px solid transparent;
}
.snaps .on {
  background: #fdbd6b;
  border-right-color: #d59a4e;
}
.snaps svg {
  fill: none;
  stroke: #d0503c;
}
.views {
  gap: 7px;
  margin-left: 3px;
}
.views button:first-child,
.views .first {
  padding-left: 8px;
  border-left: 1px solid #8596ae;
}
.shade {
  display: flex;
  align-items: center;
  gap: 7px;
  margin-left: auto;
  padding-bottom: 4px;
}
.shade input {
  width: 76px;
  height: 18px;
  appearance: none;
}
.shade input::-webkit-slider-runnable-track {
  height: 3px;
  margin: 0 8px;
  background: #e1e6ea;
}
.shade input::-webkit-slider-thumb {
  appearance: none;
  width: 10px;
  height: 17px;
  margin-top: -7px;
  border: 1px solid #aaa;
  border-radius: 1px 1px 5px 5px;
  background: #f0f0f0;
}

/* 汇总结果窗口 */
.dialog {
  position: absolute;
  left: 172px;
  right: 172px;
  top: 14px;
  bottom: 54px;
  display: flex;
  flex-direction: column;
  padding: 0 7px 10px 8px;
  border: 1px solid #d5d5d5;
  border-top: 0;
  background: #e9e9e9;
}
.dlg-head {
  display: flex;
  align-items: center;
  flex: none;
  height: 30px;
}
.dlg-icon {
  width: 16px;
  height: 16px;
}
.dlg-head h1 {
  flex: 1;
  margin: 0;
  padding-left: 70px;
  text-align: center;
  font-size: 15px;
  font-weight: normal;
}
.dlg-btns {
  display: flex;
  align-items: center;
  align-self: flex-start;
  gap: 16px;
}
.dlg-btns .close {
  display: flex;
  align-items: center;
  justify-content: center;
  width: 43px;
  height: 21px;
  margin-left: -8px;
  background: #bcbcbc;
}
.dlg-body {
  flex: 1;
  min-height: 0;
  display: flex;
  gap: 2px;
  background: #d8e7f5;
}
.scope {
  display: flex;
  flex-direction: column;
  flex: none;
  width: 185px;
  padding: 0 1px 1px 2px;
  background: #9fc6ee;
}
.scope label,
.options label {
  display: flex;
  align-items: center;
}
.scope-mode {
  height: 65px;
  padding: 6px 0 0 15px;
}
.scope-mode label {
  gap: 4px;
  height: 23px;
}
input[type="radio"] {
  appearance: none;
  width: 13px;
  height: 13px;
  border: 1px solid #777;
  border-radius: 50%;
  background: #fff;
}
input[type="radio"]:checked {
  background: radial-gradient(#222 3px, #fff 4px);
}
input[type="checkbox"] {
  display: grid;
  place-items: center;
  appearance: none;
  flex: none;
  width: 13px;
  height: 13px;
  border: 1px solid #6d737a;
  background: #fdfefd;
}
input[type="checkbox"]:checked::after {
  content: "";
  width: 5px;
  height: 9px;
  margin-bottom: 3px;
  border: solid #111;
  border-width: 0 2px 2px 0;
  transform: rotate(42deg);
}
.majors {
  height: 109px;
  margin-bottom: 3px;
  padding-left: 3px;
  border: 1px solid #7d95b0;
  background: #fafcfa;
}
.majors label {
  gap: 4px;
  height: 24px;
}
.majors input[type="checkbox"] {
  width: 11px;
  height: 11px;
  border-color: #b5b5b5;
}
.tree {
  flex: 1;
  padding-left: 9px;
  border: 1px solid #7d95b0;
  background: #fafcfa;
}
.tree label {
  gap: 1px;
  height: 20px;
  padding-left: 33px;
}
.tree label > svg:not([width]) {
  margin-right: 2px;
}
.tree .root {
  padding-left: 0;
}
.tree .root input {
  margin-left: 5px;
}
.result {
  flex: 1;
  min-width: 0;
  display: flex;
  flex-direction: column;
}
.result-tabs {
  display: flex;
  align-items: center;
  flex: none;
  height: 33px;
  background: #9fc6ee;
}
.result-tab {
  align-self: flex-end;
  width: 86px;
  height: 31px;
  border: 1px solid #8e8e88;
  border-bottom: 0;
  background: linear-gradient(#fbb863, #fbc27a);
}
.levels {
  display: flex;
  gap: 15px;
  margin-left: 221px;
}
.levels button {
  width: 15px;
  height: 15px;
  border-radius: 3px;
  background: #2f6db5;
  color: #fff;
  font-size: 11px;
  font-weight: bold;
  font-family: "Liberation Serif", "Noto Sans CJK SC", serif;
  line-height: 15px;
}
.upper {
  flex: 1;
  min-height: 0;
  display: flex;
  gap: 1px;
}
.grid-box {
  flex: 1;
  min-width: 0;
  display: grid;
  grid-template: minmax(0, 1fr) 18px / minmax(0, 1fr) 16px;
  border: 1px solid #5f6b77;
  background: #efefef;
}
.grid-view {
  overflow: hidden;
}
.c-no {
  width: 33px;
}
.c-spec {
  width: 154px;
}
.c-unit {
  width: 41px;
}
.c-qty {
  width: 65px;
}
.c-more {
  width: 12px;
}
.sum th,
.sum td {
  height: 19px;
  line-height: 18px;
  border-right: 1px solid #bcc4c8;
  border-bottom: 1px solid #bcc0c0;
  background: #fafcfa;
}
.sum th {
  background: linear-gradient(#f6f9fc, #dce8f3);
}
.sum thead th {
  position: relative;
}
.sum .on,
.source .on {
  background: linear-gradient(#fbce94, #f7bc70);
}
.sum th.cut {
  text-align: left;
  padding-left: 4px;
}
.sort {
  position: absolute;
  right: 5px;
  bottom: 3px;
  border: 5px solid transparent;
  border-bottom-color: #14222e;
  border-top: 0;
}
.sum .filter th {
  border-bottom: 2px solid #3d7ab0;
}
.filter svg {
  width: 16px;
  height: 16px;
  margin-left: 12px;
}
.sum tbody th {
  font-size: 11px;
}
.sum td:nth-child(3) {
  padding-left: 3px;
  font-family: "Liberation Mono", monospace;
  font-size: 11px;
}
.sum td:nth-child(4) {
  text-align: center;
  font-family: "Liberation Mono", monospace;
  font-size: 11px;
}
.sum td:nth-child(5) {
  padding-right: 3px;
  text-align: right;
  font-family: "Liberation Mono", monospace;
  font-size: 11px;
}
.sum td:nth-child(n + 5) {
  border-color: #e0bdb5;
  background: #f6c9bf;
}
.sum .cur th {
  background: linear-gradient(#fbc888, #f7b96a);
}
.sum .cur td:nth-child(2) {
  outline: 2px solid #111;
  outline-offset: -1px;
}
.stem {
  display: inline-block;
  width: 10px;
  height: 18px;
  margin: 0 2px 0 8px;
  vertical-align: top;
  background: repeating-linear-gradient(#888 0 1px, transparent 1px 2px) 0 0 / 1px 18px no-repeat,
    repeating-linear-gradient(90deg, #888 0 1px, transparent 1px 2px) 0 9px / 10px 1px no-repeat;
}
.vbar,
.hbar {
  display: flex;
  align-items: center;
  background: #efefef;
}
.vbar {
  flex-direction: column;
}
.vbar button,
.hbar button {
  padding: 3px;
}
.vbar svg,
.hbar svg {
  width: 10px !important;
  height: 10px !important;
  fill: none;
  stroke: #444;
  stroke-width: 2;
}
.vbar i,
.hbar i {
  width: 16px;
  height: 16px;
  background: #cbcbcb;
}
.vbar .end {
  margin-top: auto;
}
.hbar .end {
  margin-left: auto;
}
.options {
  display: flex;
  align-items: center;
  flex: none;
  width: 167px;
}
.handle {
  display: grid;
  place-items: center;
  width: 8px;
  height: 62px;
  border-radius: 0 4px 4px 0;
  background: #8ab9f2;
}
.handle::after {
  content: "";
  border: 4px solid transparent;
  border-left-color: #fff;
  border-right: 0;
}
.option-list {
  flex: 1;
  align-self: stretch;
  padding: 2px 6px 0 4px;
}
fieldset {
  height: 220px;
  min-width: 0;
  margin: 0;
  padding: 0 0 0 11px;
  border: 0;
}
fieldset.show {
  padding-left: 8px;
}
legend {
  display: block;
  margin-left: -2px;
  padding: 0;
  line-height: 18px;
}
fieldset.show {
  height: 96px;
  margin-top: 13px;
}
.options label {
  gap: 4px;
  height: 22px;
  white-space: nowrap;
}
.options fieldset label {
  gap: 3px;
}
.actions {
  display: flex;
  margin-top: -10px;
}
.actions button {
  display: flex;
  align-items: center;
  justify-content: center;
  gap: 5px;
  height: 27px;
  flex: 1;
  border-right: 1px solid #777;
  background: linear-gradient(#f6f7f8, #cdd0d0);
}
.actions button:first-child {
  flex: none;
  width: 80px;
}
.actions button:last-child {
  border: 0;
}
.actions .drop {
  margin-left: 9px;
}
.lower {
  display: flex;
  flex-direction: column;
  justify-content: space-between;
  flex: none;
  height: 130px;
  margin-top: 3px;
  border: 1px solid #5f6b77;
  background: #fafcfa;
}
.s-draw {
  width: 155px;
}
.s-name {
  width: 218px;
}
.s-spec {
  width: 129px;
}
.s-road {
  width: 65px;
}
.s-unit {
  width: 42px;
}
.s-more {
  width: 6px;
}
.source th,
.source td {
  height: 18px;
  line-height: 17px;
  border-right: 1px solid #b9bdbd;
  border-bottom: 1px solid #b9bdbd;
}
.source th {
  background: #f1f2f3;
}
.source td {
  padding-left: 2px;
}
.source td:first-child {
  border-right-color: #111;
}
.sel td + td {
  background: #0a9df7;
  color: #fff;
}
.dlg-status {
  display: flex;
  align-items: center;
  height: 17px;
  padding-left: 538px;
  background: #efefef;
}
.dlg-status svg {
  margin-left: auto;
  align-self: flex-end;
}
.pointer {
  position: absolute;
  left: 933px;
  top: 277px;
  width: 13px;
  height: 21px;
}

/* 输入法条 */
.ime {
  position: absolute;
  right: 1px;
  bottom: 85px;
  display: flex;
  align-items: center;
  gap: 6px;
  height: 24px;
  padding-right: 4px;
  background: #fdfefe;
  color: #2f86cc;
  font-size: 16px;
}
.ime svg {
  width: 16px;
  height: 16px;
  fill: none;
  stroke: #2f86cc;
}
.ime .bing {
  width: 22px;
  height: 24px;
  stroke: none;
}
.ime .gray {
  stroke: #888;
}

/* 任务栏 */
.taskbar {
  display: flex;
  align-items: center;
  flex: none;
  height: 40px;
  padding-left: 14px;
  background: #4b86c4;
  color: #fff;
  font-family: "Open Sans", "Noto Sans CJK SC", sans-serif;
}
.pin {
  width: 32px;
  margin-right: 32px;
}
.pin + .pin + .pin {
  margin-right: 16px;
}
.task {
  display: flex;
  align-items: center;
  gap: 8px;
  width: 159px;
  height: 38px;
  padding: 0 8px;
  margin-right: 3px;
  border: 1px solid #7ea9d6;
  background: #689aca;
  white-space: nowrap;
}
.task:nth-of-type(4) {
  gap: 11px;
}
.task.on {
  gap: 6px;
  border-color: #b5cfe9;
  background: #8aaed5;
}
.tray {
  display: flex;
  align-items: center;
  gap: 8px;
  margin-left: auto;
  padding-right: 27px;
}
.tray svg {
  width: 16px;
  height: 16px;
}
.lang {
  margin: 0 8px 0 2px;
}
.tray time {
  text-align: center;
  line-height: 17px;
}
```
